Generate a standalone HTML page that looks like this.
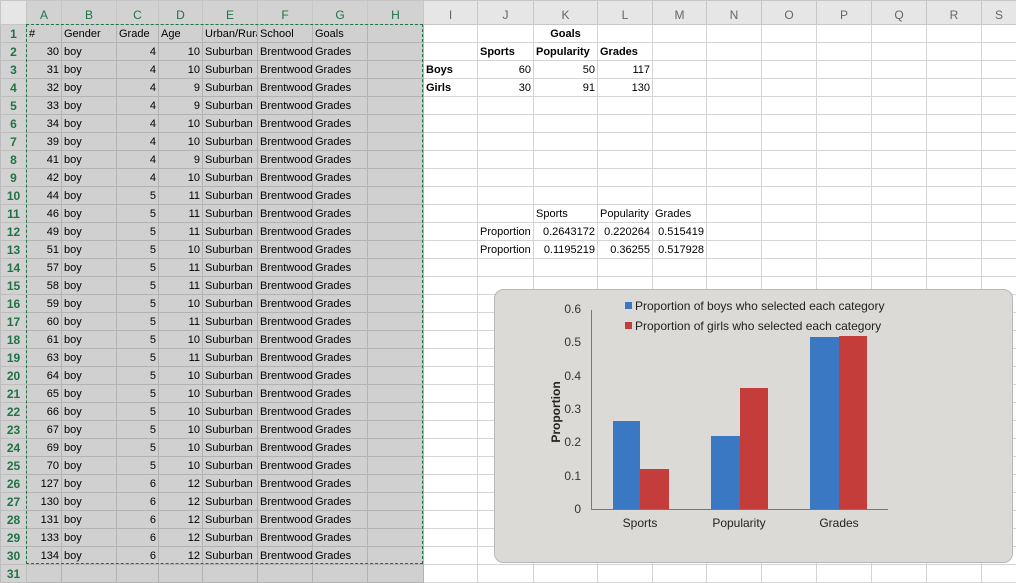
<!DOCTYPE html>
<html><head><style>
body{margin:0;width:1016px;height:566px;overflow:hidden;background:#fff;font-family:"Liberation Sans",Arial,sans-serif;position:relative}
table{border-collapse:collapse;table-layout:fixed;width:1016px;position:absolute;left:0;top:0}
td,th{border:1px solid #d4d4d4;font-size:11px;padding:0 2px;white-space:nowrap;overflow:hidden;font-weight:normal;color:#000;text-align:left;line-height:16px}
tr{height:18px}
tr.h{height:24px}
tr.h th{background:#e6e6e6;color:#666;text-align:center;font-size:12px;border-color:#c6c6c6;padding-top:5px}
tr.h th.g{background:#d2d2d2;color:#217346}
tr.d th{background:#d2d2d2;color:#217346;text-align:center;font-weight:bold;font-size:12px;border-color:#bdbdbd;padding:0}
tr.d td:nth-child(-n+9){background:#d0d0d0;border-color:#b3b3b3}
.r{text-align:right}
.b{font-weight:bold}
.c{text-align:center}
#sel{position:absolute;left:26px;top:24px;width:395px;height:538px;border:1px dashed #217346}
</style></head><body>
<table>
<colgroup><col style="width:26px"><col style="width:35px"><col style="width:55px"><col style="width:42px"><col style="width:44px"><col style="width:55px"><col style="width:55px"><col style="width:55px"><col style="width:56px"><col style="width:54px"><col style="width:56px"><col style="width:64px"><col style="width:55px"><col style="width:54px"><col style="width:55px"><col style="width:55px"><col style="width:55px"><col style="width:55px"><col style="width:55px"><col style="width:35px"></colgroup>
<tr class="h"><th style="background:#e6e6e6"></th><th class="g">A</th><th class="g">B</th><th class="g">C</th><th class="g">D</th><th class="g">E</th><th class="g">F</th><th class="g">G</th><th class="g">H</th><th>I</th><th>J</th><th>K</th><th>L</th><th>M</th><th>N</th><th>O</th><th>P</th><th>Q</th><th>R</th><th>S</th></tr>
<tr class="d"><th>1</th><td>#</td><td>Gender</td><td>Grade</td><td>Age</td><td>Urban/Rural</td><td>School</td><td>Goals</td><td></td><td></td><td></td><td class="b" style="overflow:visible;text-align:center">Goals</td><td></td><td></td><td></td><td></td><td></td><td></td><td></td><td></td></tr>
<tr class="d"><th>2</th><td class="r">30</td><td>boy</td><td class="r">4</td><td class="r">10</td><td>Suburban</td><td>Brentwood</td><td>Grades</td><td></td><td></td><td class="b">Sports</td><td class="b">Popularity</td><td class="b">Grades</td><td></td><td></td><td></td><td></td><td></td><td></td><td></td></tr>
<tr class="d"><th>3</th><td class="r">31</td><td>boy</td><td class="r">4</td><td class="r">10</td><td>Suburban</td><td>Brentwood</td><td>Grades</td><td></td><td class="b">Boys</td><td class="r">60</td><td class="r">50</td><td class="r">117</td><td></td><td></td><td></td><td></td><td></td><td></td><td></td></tr>
<tr class="d"><th>4</th><td class="r">32</td><td>boy</td><td class="r">4</td><td class="r">9</td><td>Suburban</td><td>Brentwood</td><td>Grades</td><td></td><td class="b">Girls</td><td class="r">30</td><td class="r">91</td><td class="r">130</td><td></td><td></td><td></td><td></td><td></td><td></td><td></td></tr>
<tr class="d"><th>5</th><td class="r">33</td><td>boy</td><td class="r">4</td><td class="r">9</td><td>Suburban</td><td>Brentwood</td><td>Grades</td><td></td><td></td><td></td><td></td><td></td><td></td><td></td><td></td><td></td><td></td><td></td><td></td></tr>
<tr class="d"><th>6</th><td class="r">34</td><td>boy</td><td class="r">4</td><td class="r">10</td><td>Suburban</td><td>Brentwood</td><td>Grades</td><td></td><td></td><td></td><td></td><td></td><td></td><td></td><td></td><td></td><td></td><td></td><td></td></tr>
<tr class="d"><th>7</th><td class="r">39</td><td>boy</td><td class="r">4</td><td class="r">10</td><td>Suburban</td><td>Brentwood</td><td>Grades</td><td></td><td></td><td></td><td></td><td></td><td></td><td></td><td></td><td></td><td></td><td></td><td></td></tr>
<tr class="d"><th>8</th><td class="r">41</td><td>boy</td><td class="r">4</td><td class="r">9</td><td>Suburban</td><td>Brentwood</td><td>Grades</td><td></td><td></td><td></td><td></td><td></td><td></td><td></td><td></td><td></td><td></td><td></td><td></td></tr>
<tr class="d"><th>9</th><td class="r">42</td><td>boy</td><td class="r">4</td><td class="r">10</td><td>Suburban</td><td>Brentwood</td><td>Grades</td><td></td><td></td><td></td><td></td><td></td><td></td><td></td><td></td><td></td><td></td><td></td><td></td></tr>
<tr class="d"><th>10</th><td class="r">44</td><td>boy</td><td class="r">5</td><td class="r">11</td><td>Suburban</td><td>Brentwood</td><td>Grades</td><td></td><td></td><td></td><td></td><td></td><td></td><td></td><td></td><td></td><td></td><td></td><td></td></tr>
<tr class="d"><th>11</th><td class="r">46</td><td>boy</td><td class="r">5</td><td class="r">11</td><td>Suburban</td><td>Brentwood</td><td>Grades</td><td></td><td></td><td></td><td>Sports</td><td>Popularity</td><td>Grades</td><td></td><td></td><td></td><td></td><td></td><td></td></tr>
<tr class="d"><th>12</th><td class="r">49</td><td>boy</td><td class="r">5</td><td class="r">11</td><td>Suburban</td><td>Brentwood</td><td>Grades</td><td></td><td></td><td>Proportion</td><td class="r">0.2643172</td><td class="r">0.220264</td><td class="r">0.515419</td><td></td><td></td><td></td><td></td><td></td><td></td></tr>
<tr class="d"><th>13</th><td class="r">51</td><td>boy</td><td class="r">5</td><td class="r">10</td><td>Suburban</td><td>Brentwood</td><td>Grades</td><td></td><td></td><td>Proportion</td><td class="r">0.1195219</td><td class="r">0.36255</td><td class="r">0.517928</td><td></td><td></td><td></td><td></td><td></td><td></td></tr>
<tr class="d"><th>14</th><td class="r">57</td><td>boy</td><td class="r">5</td><td class="r">11</td><td>Suburban</td><td>Brentwood</td><td>Grades</td><td></td><td></td><td></td><td></td><td></td><td></td><td></td><td></td><td></td><td></td><td></td><td></td></tr>
<tr class="d"><th>15</th><td class="r">58</td><td>boy</td><td class="r">5</td><td class="r">11</td><td>Suburban</td><td>Brentwood</td><td>Grades</td><td></td><td></td><td></td><td></td><td></td><td></td><td></td><td></td><td></td><td></td><td></td><td></td></tr>
<tr class="d"><th>16</th><td class="r">59</td><td>boy</td><td class="r">5</td><td class="r">10</td><td>Suburban</td><td>Brentwood</td><td>Grades</td><td></td><td></td><td></td><td></td><td></td><td></td><td></td><td></td><td></td><td></td><td></td><td></td></tr>
<tr class="d"><th>17</th><td class="r">60</td><td>boy</td><td class="r">5</td><td class="r">11</td><td>Suburban</td><td>Brentwood</td><td>Grades</td><td></td><td></td><td></td><td></td><td></td><td></td><td></td><td></td><td></td><td></td><td></td><td></td></tr>
<tr class="d"><th>18</th><td class="r">61</td><td>boy</td><td class="r">5</td><td class="r">10</td><td>Suburban</td><td>Brentwood</td><td>Grades</td><td></td><td></td><td></td><td></td><td></td><td></td><td></td><td></td><td></td><td></td><td></td><td></td></tr>
<tr class="d"><th>19</th><td class="r">63</td><td>boy</td><td class="r">5</td><td class="r">11</td><td>Suburban</td><td>Brentwood</td><td>Grades</td><td></td><td></td><td></td><td></td><td></td><td></td><td></td><td></td><td></td><td></td><td></td><td></td></tr>
<tr class="d"><th>20</th><td class="r">64</td><td>boy</td><td class="r">5</td><td class="r">10</td><td>Suburban</td><td>Brentwood</td><td>Grades</td><td></td><td></td><td></td><td></td><td></td><td></td><td></td><td></td><td></td><td></td><td></td><td></td></tr>
<tr class="d"><th>21</th><td class="r">65</td><td>boy</td><td class="r">5</td><td class="r">10</td><td>Suburban</td><td>Brentwood</td><td>Grades</td><td></td><td></td><td></td><td></td><td></td><td></td><td></td><td></td><td></td><td></td><td></td><td></td></tr>
<tr class="d"><th>22</th><td class="r">66</td><td>boy</td><td class="r">5</td><td class="r">10</td><td>Suburban</td><td>Brentwood</td><td>Grades</td><td></td><td></td><td></td><td></td><td></td><td></td><td></td><td></td><td></td><td></td><td></td><td></td></tr>
<tr class="d"><th>23</th><td class="r">67</td><td>boy</td><td class="r">5</td><td class="r">10</td><td>Suburban</td><td>Brentwood</td><td>Grades</td><td></td><td></td><td></td><td></td><td></td><td></td><td></td><td></td><td></td><td></td><td></td><td></td></tr>
<tr class="d"><th>24</th><td class="r">69</td><td>boy</td><td class="r">5</td><td class="r">10</td><td>Suburban</td><td>Brentwood</td><td>Grades</td><td></td><td></td><td></td><td></td><td></td><td></td><td></td><td></td><td></td><td></td><td></td><td></td></tr>
<tr class="d"><th>25</th><td class="r">70</td><td>boy</td><td class="r">5</td><td class="r">10</td><td>Suburban</td><td>Brentwood</td><td>Grades</td><td></td><td></td><td></td><td></td><td></td><td></td><td></td><td></td><td></td><td></td><td></td><td></td></tr>
<tr class="d"><th>26</th><td class="r">127</td><td>boy</td><td class="r">6</td><td class="r">12</td><td>Suburban</td><td>Brentwood</td><td>Grades</td><td></td><td></td><td></td><td></td><td></td><td></td><td></td><td></td><td></td><td></td><td></td><td></td></tr>
<tr class="d"><th>27</th><td class="r">130</td><td>boy</td><td class="r">6</td><td class="r">12</td><td>Suburban</td><td>Brentwood</td><td>Grades</td><td></td><td></td><td></td><td></td><td></td><td></td><td></td><td></td><td></td><td></td><td></td><td></td></tr>
<tr class="d"><th>28</th><td class="r">131</td><td>boy</td><td class="r">6</td><td class="r">12</td><td>Suburban</td><td>Brentwood</td><td>Grades</td><td></td><td></td><td></td><td></td><td></td><td></td><td></td><td></td><td></td><td></td><td></td><td></td></tr>
<tr class="d"><th>29</th><td class="r">133</td><td>boy</td><td class="r">6</td><td class="r">12</td><td>Suburban</td><td>Brentwood</td><td>Grades</td><td></td><td></td><td></td><td></td><td></td><td></td><td></td><td></td><td></td><td></td><td></td><td></td></tr>
<tr class="d"><th>30</th><td class="r">134</td><td>boy</td><td class="r">6</td><td class="r">12</td><td>Suburban</td><td>Brentwood</td><td>Grades</td><td></td><td></td><td></td><td></td><td></td><td></td><td></td><td></td><td></td><td></td><td></td><td></td></tr>
<tr class="d"><th>31</th><td></td><td></td><td></td><td></td><td></td><td></td><td></td><td></td><td></td><td></td><td></td><td></td><td></td><td></td><td></td><td></td><td></td><td></td><td></td></tr>
</table>
<div id="sel"></div>
<svg style="position:absolute;left:0;top:0" width="1016" height="566" font-family="Liberation Sans, Arial, sans-serif">
<rect x="494.5" y="289.5" width="518" height="273" rx="9" fill="#dcdad6" stroke="#b8b8b8"/>
<g font-size="12" fill="#333" text-anchor="end">
<text x="581" y="313">0.6</text><text x="581" y="346">0.5</text><text x="581" y="380">0.4</text><text x="581" y="413">0.3</text><text x="581" y="446">0.2</text><text x="581" y="480">0.1</text><text x="581" y="513">0</text>
</g>
<text transform="translate(560,412) rotate(-90)" font-size="12" font-weight="bold" fill="#222" text-anchor="middle">Proportion</text>
<rect x="613" y="421" width="27" height="88" fill="#3b78c3"/><rect x="640" y="469" width="29" height="40" fill="#c43d3b"/>
<rect x="711" y="436" width="29" height="73" fill="#3b78c3"/><rect x="740" y="388" width="28" height="121" fill="#c43d3b"/>
<rect x="810" y="337" width="29" height="172" fill="#3b78c3"/><rect x="839" y="336" width="28" height="173" fill="#c43d3b"/>
<line x1="591.5" y1="310" x2="591.5" y2="509" stroke="#777"/>
<line x1="591" y1="509.5" x2="888" y2="509.5" stroke="#777"/>
<g font-size="12" fill="#222" text-anchor="middle">
<text x="640" y="527">Sports</text><text x="739" y="527">Popularity</text><text x="839" y="527">Grades</text>
</g>
<rect x="625" y="302" width="7" height="7" fill="#3b78c3"/><rect x="625" y="322" width="7" height="7" fill="#c43d3b"/>
<g font-size="12" fill="#222"><text x="635" y="310">Proportion of boys who selected each category</text><text x="635" y="330">Proportion of girls who selected each category</text></g>
</svg>
</body></html>
